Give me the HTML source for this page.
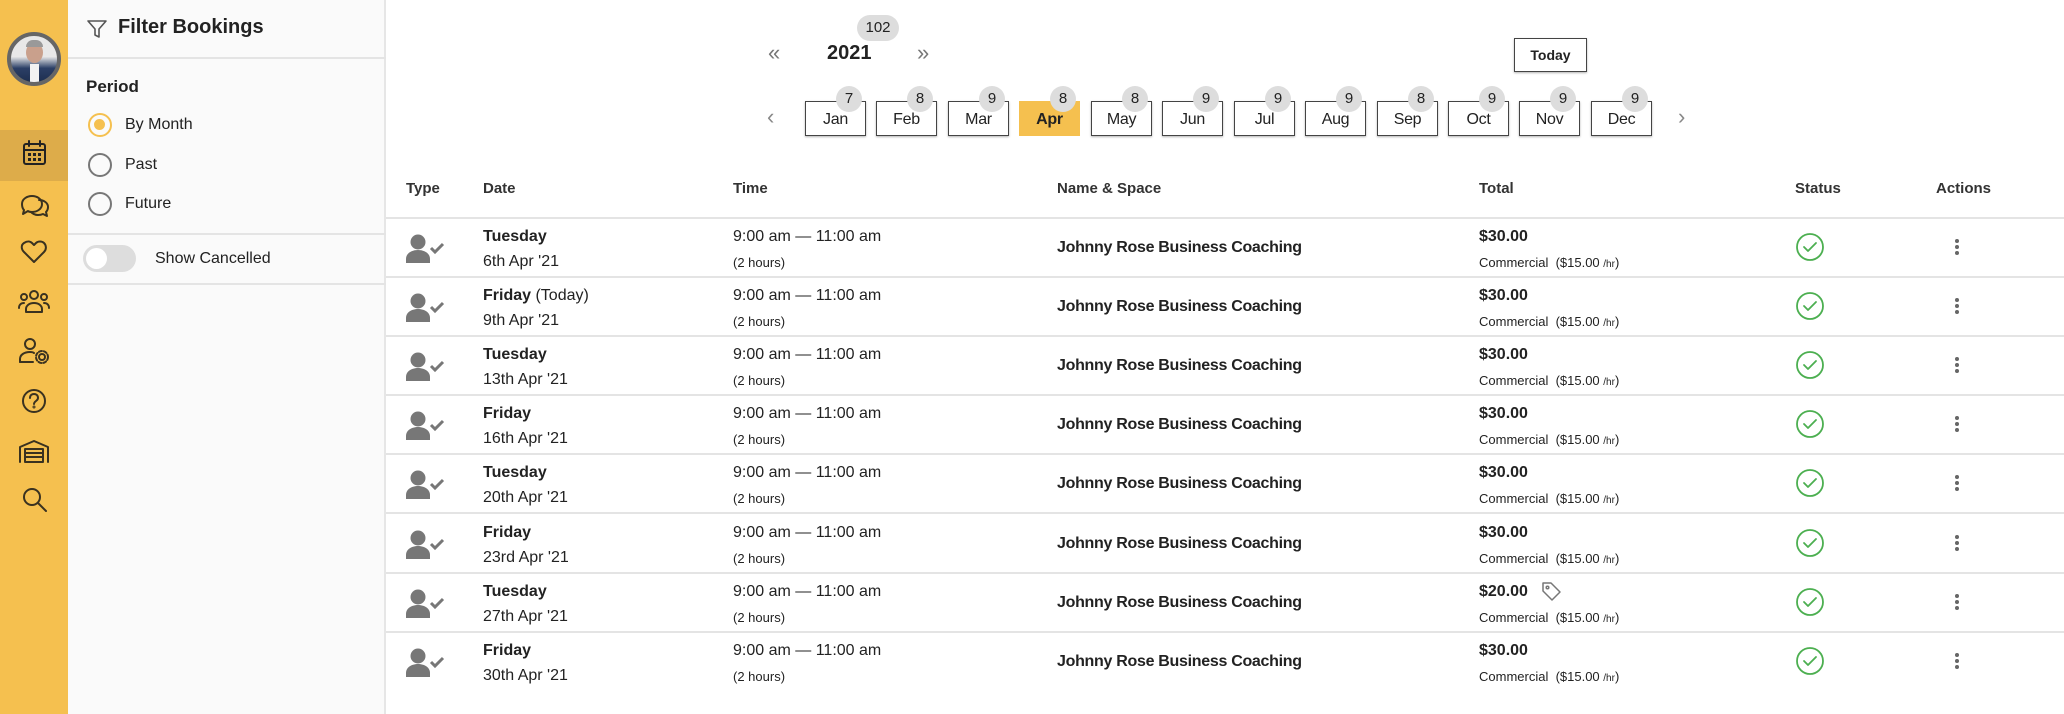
<!DOCTYPE html>
<html><head><meta charset="utf-8"><style>
*{margin:0;padding:0;box-sizing:border-box}
body{width:2064px;height:714px;overflow:hidden;background:#fff;font-family:"Liberation Sans",sans-serif;color:#222;position:relative}
.a{position:absolute;white-space:nowrap}
#side{left:0;top:0;width:68px;height:714px;background:#F5C04F}
#filter{left:68px;top:0;width:318px;height:714px;background:#fafafa;border-right:2px solid #e6e6e6}
.hr{position:absolute;height:2px;background:#e4e4e4}
.radio{position:absolute;width:24px;height:24px;border-radius:50%;border:2.5px solid #777}
.mb{position:absolute;top:101px;width:61px;height:35px;border:1.5px solid #444;box-shadow:0 1px 2px rgba(0,0,0,.3);font-size:16px;text-align:center;line-height:36px;background:#fff;letter-spacing:-0.3px}
.bd{position:absolute;width:26px;height:26px;border-radius:50%;background:#ddd;font-size:15px;text-align:center;line-height:26px;color:#222}
.th{position:absolute;top:180px;font-size:15px;font-weight:bold;color:#333}
.row{position:absolute;left:386px;width:1678px;height:59px;border-bottom:2px solid #e4e4e4}
.row .t{position:absolute;font-size:16px}
.b{font-weight:bold}
.s{font-size:13px!important}
</style></head><body>
<div class="a" id="side">
 <div style="position:absolute;left:7px;top:32px;width:54px;height:54px;border-radius:50%;border:4px solid #666;background:linear-gradient(180deg,#e8e8e8 0%,#e8e8e8 45%,#2b3f66 70%,#1e2f50 100%);overflow:hidden">
  <div style="position:absolute;left:15px;top:6px;width:17px;height:21px;border-radius:50%;background:#c9a08c"></div>
  <div style="position:absolute;left:15px;top:4px;width:17px;height:7px;border-radius:8px 8px 0 0;background:#999"></div>
  <div style="position:absolute;left:19px;top:28px;width:9px;height:18px;background:#f2f2f2"></div>
 </div>
 <div style="position:absolute;left:0;top:130px;width:68px;height:51px;background:#DDAC4A"></div>
 <svg width="68" height="714" style="position:absolute;left:0;top:0" fill="none" stroke="#3a3220" stroke-width="2" stroke-linecap="round" stroke-linejoin="round">
  <rect x="24" y="144" width="21" height="20" rx="2" stroke="#222"/><line x1="24" y1="150" x2="45" y2="150" stroke="#222"/><line x1="29" y1="141" x2="29" y2="146" stroke="#222"/><line x1="40" y1="141" x2="40" y2="146" stroke="#222"/>
  <g fill="#222" stroke="none"><rect x="28" y="153" width="3" height="3"/><rect x="33" y="153" width="3" height="3"/><rect x="38" y="153" width="3" height="3"/><rect x="28" y="158" width="3" height="3"/><rect x="33" y="158" width="3" height="3"/><rect x="38" y="158" width="3" height="3"/></g>
  <path d="M22 204c0-5 5-8 10-8s10 3 10 8-5 8-10 8c-2 0-3 0-4-1l-5 3 1-4c-1-1-2-3-2-6z"/><path d="M39 200c5 0 9 3 9 7 0 2-1 4-2 5l1 4-4-2c-2 1-3 1-5 1-3 0-5-1-7-3"/>
  <path d="M34 262l-10-10c-3-3-3-7 0-9s6-2 8 0l2 2 2-2c2-2 6-2 8 0s3 6 0 9z"/>
  <circle cx="34" cy="295" r="4"/><circle cx="24" cy="297" r="3"/><circle cx="44" cy="297" r="3"/><path d="M26 312v-3c0-3 3-6 8-6s8 3 8 6v3z"/><path d="M19 308c0-3 2-5 5-5"/><path d="M49 308c0-3-2-5-5-5"/>
  <circle cx="30" cy="344" r="5"/><path d="M20 362v-3c0-4 4-7 10-7 2 0 3 0 4 1"/><path d="M20 362h13"/><circle cx="42" cy="357" r="3"/><circle cx="42" cy="357" r="6" stroke-dasharray="3 2"/>
  <circle cx="34" cy="401" r="11"/><path d="M30 398c0-3 2-4 4-4s4 1 4 4-4 3-4 6"/><circle cx="34" cy="407" r=".5"/>
  <path d="M20 462v-15l14-6 14 6v15"/><rect x="25" y="449" width="18" height="13"/><line x1="25" y1="453" x2="43" y2="453"/><line x1="25" y1="457" x2="43" y2="457"/>
  <circle cx="32" cy="497" r="8"/><line x1="38" y1="503" x2="46" y2="511"/>
 </svg>
</div>
<div class="a" id="filter">
 <svg width="24" height="24" style="position:absolute;left:17px;top:17px" fill="none" stroke="#555" stroke-width="1.6" stroke-linejoin="round"><path d="M3 4h18l-7 8v8l-4-2v-6z"/></svg>
 <div class="a b" style="left:50px;top:16px;font-size:20px">Filter Bookings</div>
 <div class="hr" style="left:0;top:57px;width:318px"></div>
 <div class="a b" style="left:18px;top:77px;font-size:17px">Period</div>
 <div class="radio" style="left:20px;top:113px;border-color:#F5C04F"><div style="position:absolute;left:4px;top:4px;width:11px;height:11px;border-radius:50%;background:#F5C04F"></div></div>
 <div class="a" style="left:57px;top:116px;font-size:16px">By Month</div>
 <div class="radio" style="left:20px;top:153px"></div>
 <div class="a" style="left:57px;top:156px;font-size:16px">Past</div>
 <div class="radio" style="left:20px;top:192px"></div>
 <div class="a" style="left:57px;top:195px;font-size:16px">Future</div>
 <div class="hr" style="left:0;top:233px;width:318px"></div>
 <div style="position:absolute;left:15px;top:245px;width:53px;height:27px;border-radius:14px;background:#ddd"><div style="position:absolute;left:3px;top:3px;width:21px;height:21px;border-radius:50%;background:#fff"></div></div>
 <div class="a" style="left:87px;top:250px;font-size:16px">Show Cancelled</div>
 <div class="hr" style="left:0;top:283px;width:318px"></div>
</div>

<div class="bd" style="left:857px;top:15px;width:42px;border-radius:13px">102</div>
<div class="a" style="left:768px;top:40px;font-size:22px;color:#777">«</div>
<div class="a b" style="left:827px;top:42px;font-size:20px">2021</div>
<div class="a" style="left:917px;top:40px;font-size:22px;color:#777">»</div>
<div class="a" style="left:1514px;top:38px;width:73px;height:34px;border:1.5px solid #444;box-shadow:0 1px 2px rgba(0,0,0,.3);font-size:14px;font-weight:bold;text-align:center;line-height:32px">Today</div>
<div class="a" style="left:767px;top:104px;font-size:22px;color:#888">‹</div>
<div class="a" style="left:1678px;top:104px;font-size:22px;color:#888">›</div>

<div class="mb" style="left:805px">Jan</div><div class="bd" style="left:836px;top:86px">7</div>
<div class="mb" style="left:876px">Feb</div><div class="bd" style="left:907px;top:86px">8</div>
<div class="mb" style="left:948px">Mar</div><div class="bd" style="left:979px;top:86px">9</div>
<div class="mb" style="left:1019px;background:#F5C04F;border-color:#F5C04F;font-weight:bold;box-shadow:none">Apr</div><div class="bd" style="left:1050px;top:86px">8</div>
<div class="mb" style="left:1091px">May</div><div class="bd" style="left:1122px;top:86px">8</div>
<div class="mb" style="left:1162px">Jun</div><div class="bd" style="left:1193px;top:86px">9</div>
<div class="mb" style="left:1234px">Jul</div><div class="bd" style="left:1265px;top:86px">9</div>
<div class="mb" style="left:1305px">Aug</div><div class="bd" style="left:1336px;top:86px">9</div>
<div class="mb" style="left:1377px">Sep</div><div class="bd" style="left:1408px;top:86px">8</div>
<div class="mb" style="left:1448px">Oct</div><div class="bd" style="left:1479px;top:86px">9</div>
<div class="mb" style="left:1519px">Nov</div><div class="bd" style="left:1550px;top:86px">9</div>
<div class="mb" style="left:1591px">Dec</div><div class="bd" style="left:1622px;top:86px">9</div>

<div class="th" style="left:406px">Type</div>
<div class="th" style="left:483px">Date</div>
<div class="th" style="left:733px">Time</div>
<div class="th" style="left:1057px">Name &amp; Space</div>
<div class="th" style="left:1479px">Total</div>
<div class="th" style="left:1795px">Status</div>
<div class="th" style="left:1936px">Actions</div>
<div class="hr" style="left:386px;top:217px;width:1678px"></div>

<svg width="0" height="0" style="position:absolute"><defs>
<g id="pi"><circle cx="12" cy="13" r="7.5" fill="#777"/><path d="M0 34v-4c0-6 6-9 12-9s12 3 12 9v4z" fill="#777"/><path d="M25 19l4 4 8-8" stroke="#777" stroke-width="3" fill="none"/></g>
<g id="ok"><circle cx="15" cy="15" r="13" fill="none" stroke="#4caf50" stroke-width="1.8"/><path d="M9 15l4 4 8-8" fill="none" stroke="#4caf50" stroke-width="1.8" stroke-linecap="round" stroke-linejoin="round"/></g>
<g id="dt" fill="#666"><circle cx="2" cy="2" r="2"/><circle cx="2" cy="8" r="2"/><circle cx="2" cy="14" r="2"/></g>
</defs></svg>

<!-- rows -->
<div class="row" style="top:219px">
<svg class="a" style="left:20px;top:10px" width="40" height="36"><use href="#pi"/></svg>
<div class="t b" style="left:97px;top:9px">Tuesday</div><div class="t" style="left:97px;top:34px">6th Apr '21</div>
<div class="t" style="left:347px;top:9px">9:00 am — 11:00 am</div><div class="t s" style="left:347px;top:36px">(2 hours)</div>
<div class="t b" style="left:671px;top:20px;letter-spacing:-0.3px">Johnny Rose Business Coaching</div>
<div class="t b" style="left:1093px;top:9px">$30.00</div><div class="t s" style="left:1093px;top:36px">Commercial&nbsp; ($15.00 <span style="font-size:10px">/hr</span>)</div>
<svg class="a" style="left:1409px;top:13px" width="30" height="30"><use href="#ok"/></svg>
<svg class="a" style="left:1569px;top:20px" width="4" height="16"><use href="#dt"/></svg>
</div>
<div class="row" style="top:278px">
<svg class="a" style="left:20px;top:10px" width="40" height="36"><use href="#pi"/></svg>
<div class="t" style="left:97px;top:9px"><b>Friday</b> (Today)</div><div class="t" style="left:97px;top:34px">9th Apr '21</div>
<div class="t" style="left:347px;top:9px">9:00 am — 11:00 am</div><div class="t s" style="left:347px;top:36px">(2 hours)</div>
<div class="t b" style="left:671px;top:20px;letter-spacing:-0.3px">Johnny Rose Business Coaching</div>
<div class="t b" style="left:1093px;top:9px">$30.00</div><div class="t s" style="left:1093px;top:36px">Commercial&nbsp; ($15.00 <span style="font-size:10px">/hr</span>)</div>
<svg class="a" style="left:1409px;top:13px" width="30" height="30"><use href="#ok"/></svg>
<svg class="a" style="left:1569px;top:20px" width="4" height="16"><use href="#dt"/></svg>
</div>
<div class="row" style="top:337px">
<svg class="a" style="left:20px;top:10px" width="40" height="36"><use href="#pi"/></svg>
<div class="t b" style="left:97px;top:9px">Tuesday</div><div class="t" style="left:97px;top:34px">13th Apr '21</div>
<div class="t" style="left:347px;top:9px">9:00 am — 11:00 am</div><div class="t s" style="left:347px;top:36px">(2 hours)</div>
<div class="t b" style="left:671px;top:20px;letter-spacing:-0.3px">Johnny Rose Business Coaching</div>
<div class="t b" style="left:1093px;top:9px">$30.00</div><div class="t s" style="left:1093px;top:36px">Commercial&nbsp; ($15.00 <span style="font-size:10px">/hr</span>)</div>
<svg class="a" style="left:1409px;top:13px" width="30" height="30"><use href="#ok"/></svg>
<svg class="a" style="left:1569px;top:20px" width="4" height="16"><use href="#dt"/></svg>
</div>
<div class="row" style="top:396px">
<svg class="a" style="left:20px;top:10px" width="40" height="36"><use href="#pi"/></svg>
<div class="t b" style="left:97px;top:9px">Friday</div><div class="t" style="left:97px;top:34px">16th Apr '21</div>
<div class="t" style="left:347px;top:9px">9:00 am — 11:00 am</div><div class="t s" style="left:347px;top:36px">(2 hours)</div>
<div class="t b" style="left:671px;top:20px;letter-spacing:-0.3px">Johnny Rose Business Coaching</div>
<div class="t b" style="left:1093px;top:9px">$30.00</div><div class="t s" style="left:1093px;top:36px">Commercial&nbsp; ($15.00 <span style="font-size:10px">/hr</span>)</div>
<svg class="a" style="left:1409px;top:13px" width="30" height="30"><use href="#ok"/></svg>
<svg class="a" style="left:1569px;top:20px" width="4" height="16"><use href="#dt"/></svg>
</div>
<div class="row" style="top:455px">
<svg class="a" style="left:20px;top:10px" width="40" height="36"><use href="#pi"/></svg>
<div class="t b" style="left:97px;top:9px">Tuesday</div><div class="t" style="left:97px;top:34px">20th Apr '21</div>
<div class="t" style="left:347px;top:9px">9:00 am — 11:00 am</div><div class="t s" style="left:347px;top:36px">(2 hours)</div>
<div class="t b" style="left:671px;top:20px;letter-spacing:-0.3px">Johnny Rose Business Coaching</div>
<div class="t b" style="left:1093px;top:9px">$30.00</div><div class="t s" style="left:1093px;top:36px">Commercial&nbsp; ($15.00 <span style="font-size:10px">/hr</span>)</div>
<svg class="a" style="left:1409px;top:13px" width="30" height="30"><use href="#ok"/></svg>
<svg class="a" style="left:1569px;top:20px" width="4" height="16"><use href="#dt"/></svg>
</div>
<div class="row" style="top:515px">
<svg class="a" style="left:20px;top:10px" width="40" height="36"><use href="#pi"/></svg>
<div class="t b" style="left:97px;top:9px">Friday</div><div class="t" style="left:97px;top:34px">23rd Apr '21</div>
<div class="t" style="left:347px;top:9px">9:00 am — 11:00 am</div><div class="t s" style="left:347px;top:36px">(2 hours)</div>
<div class="t b" style="left:671px;top:20px;letter-spacing:-0.3px">Johnny Rose Business Coaching</div>
<div class="t b" style="left:1093px;top:9px">$30.00</div><div class="t s" style="left:1093px;top:36px">Commercial&nbsp; ($15.00 <span style="font-size:10px">/hr</span>)</div>
<svg class="a" style="left:1409px;top:13px" width="30" height="30"><use href="#ok"/></svg>
<svg class="a" style="left:1569px;top:20px" width="4" height="16"><use href="#dt"/></svg>
</div>
<div class="row" style="top:574px">
<svg class="a" style="left:20px;top:10px" width="40" height="36"><use href="#pi"/></svg>
<div class="t b" style="left:97px;top:9px">Tuesday</div><div class="t" style="left:97px;top:34px">27th Apr '21</div>
<div class="t" style="left:347px;top:9px">9:00 am — 11:00 am</div><div class="t s" style="left:347px;top:36px">(2 hours)</div>
<div class="t b" style="left:671px;top:20px;letter-spacing:-0.3px">Johnny Rose Business Coaching</div>
<div class="t b" style="left:1093px;top:9px">$20.00</div><div class="t s" style="left:1093px;top:36px">Commercial&nbsp; ($15.00 <span style="font-size:10px">/hr</span>)</div>
<svg class="a" style="left:1154px;top:6px" width="22" height="22" fill="none" stroke="#777" stroke-width="1.5" stroke-linejoin="round"><path d="M3 3h8l9 9-8 8-9-9z"/><circle cx="7.5" cy="7.5" r="1.3"/></svg>
<svg class="a" style="left:1409px;top:13px" width="30" height="30"><use href="#ok"/></svg>
<svg class="a" style="left:1569px;top:20px" width="4" height="16"><use href="#dt"/></svg>
</div>
<div class="row" style="top:633px;border-bottom:none">
<svg class="a" style="left:20px;top:10px" width="40" height="36"><use href="#pi"/></svg>
<div class="t b" style="left:97px;top:9px">Friday</div><div class="t" style="left:97px;top:34px">30th Apr '21</div>
<div class="t" style="left:347px;top:9px">9:00 am — 11:00 am</div><div class="t s" style="left:347px;top:36px">(2 hours)</div>
<div class="t b" style="left:671px;top:20px;letter-spacing:-0.3px">Johnny Rose Business Coaching</div>
<div class="t b" style="left:1093px;top:9px">$30.00</div><div class="t s" style="left:1093px;top:36px">Commercial&nbsp; ($15.00 <span style="font-size:10px">/hr</span>)</div>
<svg class="a" style="left:1409px;top:13px" width="30" height="30"><use href="#ok"/></svg>
<svg class="a" style="left:1569px;top:20px" width="4" height="16"><use href="#dt"/></svg>
</div>
</body></html>
